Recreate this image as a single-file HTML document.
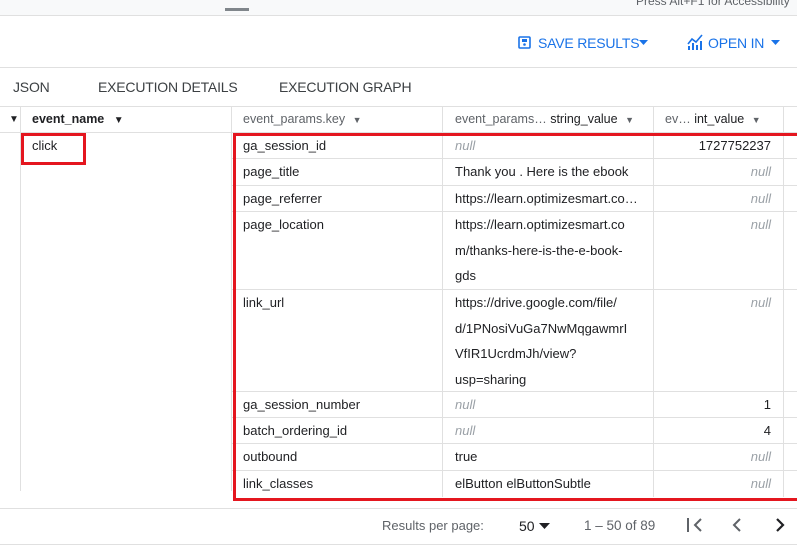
<!DOCTYPE html><html><head><style>
body{margin:0;width:797px;height:546px;overflow:hidden;background:#fff;font-family:"Liberation Sans",sans-serif;position:relative;font-size:13px;color:#202124}
.a{position:absolute}
.hl{position:absolute;left:0;width:797px;height:1px;background:#e0e0e0}
.vl{position:absolute;width:1px;background:#e0e0e0}
.c{position:absolute;line-height:25.5px;top:0}
.n{color:#9aa0a6;font-style:italic}
.blue{color:#1a73e8;font-size:14px;letter-spacing:-0.2px}
.tab{position:absolute;top:79px;font-size:14px;color:#3c4043;letter-spacing:-0.2px}
.h{position:absolute;top:112px;font-size:12.5px;color:#5f6368}
</style></head><body>
<div class="a" style="left:0;top:0;width:797px;height:15px;background:#f8f9fa"></div>
<div class="a" style="left:225px;top:8px;width:24px;height:3px;background:#80868b"></div>
<div class="a" style="left:636px;top:-6px;font-size:12px;color:#5f6368">Press Alt+F1 for Accessibility</div>
<div class="hl" style="top:15px"></div>
<svg class="a" style="left:518px;top:36px" width="13" height="13" viewBox="0 0 13 13"><rect x="1" y="1" width="11" height="11" rx="1" fill="none" stroke="#1a73e8" stroke-width="1.6"/><rect x="4" y="3" width="5" height="3" fill="#1a73e8"/><circle cx="6.5" cy="8.5" r="1.3" fill="#1a73e8"/></svg>
<div class="a blue" style="left:538px;top:35px">SAVE RESULTS</div>
<svg class="a" style="left:639px;top:40px" width="9" height="5" viewBox="0 0 9 5"><path d="M0 0H9L4.5 5Z" fill="#1a73e8"/></svg>
<svg class="a" style="left:687px;top:34px" width="17" height="16" viewBox="0 0 17 16"><path d="M1 10 L5 5 L9 8 L15 1" fill="none" stroke="#1a73e8" stroke-width="1.6"/><rect x="1" y="12" width="2" height="4" fill="#1a73e8"/><rect x="5" y="9" width="2" height="7" fill="#1a73e8"/><rect x="9" y="11" width="2" height="5" fill="#1a73e8"/><rect x="13" y="7" width="2" height="9" fill="#1a73e8"/></svg>
<div class="a blue" style="left:708px;top:35px">OPEN IN</div>
<svg class="a" style="left:771px;top:40px" width="9" height="5" viewBox="0 0 9 5"><path d="M0 0H9L4.5 5Z" fill="#1a73e8"/></svg>
<div class="hl" style="top:67px"></div>
<div class="tab" style="left:13px">JSON</div>
<div class="tab" style="left:98px">EXECUTION DETAILS</div>
<div class="tab" style="left:279px">EXECUTION GRAPH</div>
<div class="hl" style="top:106px"></div>
<div class="h" style="left:9px;color:#202124;font-size:10px;top:114px">▼</div>
<div class="h" style="left:32px;color:#202124;font-weight:bold">event_name <span style="font-size:10px;margin-left:6px">▼</span></div>
<div class="h" style="left:243px">event_params.key <span style="font-size:9px;margin-left:4px">▼</span></div>
<div class="h" style="left:455px">event_params… <span style="color:#202124">string_value</span> <span style="font-size:9px;margin-left:4px">▼</span></div>
<div class="h" style="left:665px">ev… <span style="color:#202124">int_value</span> <span style="font-size:9px;margin-left:4px">▼</span></div>
<div class="hl" style="top:132px"></div>
<div class="vl" style="left:20px;top:107px;height:384px"></div>
<div class="vl" style="left:231px;top:107px;height:384px"></div>
<div class="vl" style="left:442px;top:107px;height:390px"></div>
<div class="vl" style="left:653px;top:107px;height:390px"></div>
<div class="vl" style="left:783px;top:107px;height:390px"></div>
<div style="position:absolute;left:0;top:1px;width:797px;height:546px">
<div class="c" style="left:32px;top:132px">click</div>
<div class="c" style="left:243px;top:132px">ga_session_id</div><div class="c n" style="left:455px;top:132px">null</div><div class="c" style="left:653px;top:132px;width:118px;text-align:right">1727752237</div>
<div class="c" style="left:243px;top:158px">page_title</div><div class="c" style="left:455px;top:158px">Thank you . Here is the ebook</div><div class="c n" style="left:653px;top:158px;width:118px;text-align:right">null</div>
<div class="c" style="left:243px;top:185px">page_referrer</div><div class="c" style="left:455px;top:185px">https://learn.optimizesmart.co…</div><div class="c n" style="left:653px;top:185px;width:118px;text-align:right">null</div>
<div class="c" style="left:243px;top:211px">page_location</div><div class="c" style="left:455px;top:211px">https://learn.optimizesmart.co<br>m/thanks-here-is-the-e-book-<br>gds</div><div class="c n" style="left:653px;top:211px;width:118px;text-align:right">null</div>
<div class="c" style="left:243px;top:289px">link_url</div><div class="c" style="left:455px;top:289px">https://drive.google.com/file/<br>d/1PNosiVuGa7NwMqgawmrI<br>VfIR1UcrdmJh/view?<br>usp=sharing</div><div class="c n" style="left:653px;top:289px;width:118px;text-align:right">null</div>
<div class="c" style="left:243px;top:391px">ga_session_number</div><div class="c n" style="left:455px;top:391px">null</div><div class="c" style="left:653px;top:391px;width:118px;text-align:right">1</div>
<div class="c" style="left:243px;top:417px">batch_ordering_id</div><div class="c n" style="left:455px;top:417px">null</div><div class="c" style="left:653px;top:417px;width:118px;text-align:right">4</div>
<div class="c" style="left:243px;top:443px">outbound</div><div class="c" style="left:455px;top:443px">true</div><div class="c n" style="left:653px;top:443px;width:118px;text-align:right">null</div>
<div class="c" style="left:243px;top:470px">link_classes</div><div class="c" style="left:455px;top:470px">elButton elButtonSubtle</div><div class="c n" style="left:653px;top:470px;width:118px;text-align:right">null</div>
</div>
<div class="a" style="left:231px;top:158px;width:566px;height:1px;background:#e0e0e0"></div>
<div class="a" style="left:231px;top:185px;width:566px;height:1px;background:#e0e0e0"></div>
<div class="a" style="left:231px;top:211px;width:566px;height:1px;background:#e0e0e0"></div>
<div class="a" style="left:231px;top:289px;width:566px;height:1px;background:#e0e0e0"></div>
<div class="a" style="left:231px;top:391px;width:566px;height:1px;background:#e0e0e0"></div>
<div class="a" style="left:231px;top:417px;width:566px;height:1px;background:#e0e0e0"></div>
<div class="a" style="left:231px;top:443px;width:566px;height:1px;background:#e0e0e0"></div>
<div class="a" style="left:231px;top:470px;width:566px;height:1px;background:#e0e0e0"></div>
<div class="a" style="left:21px;top:133px;width:59px;height:26px;border:3px solid #e4161f"></div>
<div class="a" style="left:233px;top:133px;width:570px;height:362px;border:3px solid #e4161f"></div>
<div class="hl" style="top:508px"></div>
<div class="a" style="left:382px;top:518px;color:#5f6368">Results per page:</div>
<div class="a" style="left:519px;top:518px;font-size:14px">50</div>
<svg class="a" style="left:539px;top:523px" width="11" height="6" viewBox="0 0 11 6"><path d="M0 0H11L5.5 6Z" fill="#202124"/></svg>
<div class="a" style="left:584px;top:518px;color:#5f6368;font-size:13.5px">1 – 50 of 89</div>
<svg class="a" style="left:686px;top:517px" width="18" height="16" viewBox="0 0 18 16"><path d="M2 1V15" stroke="#5f6368" stroke-width="2"/><path d="M15 2L9 8L15 14" fill="none" stroke="#5f6368" stroke-width="2"/></svg>
<svg class="a" style="left:730px;top:517px" width="14" height="16" viewBox="0 0 14 16"><path d="M10 2L4 8L10 14" fill="none" stroke="#5f6368" stroke-width="2"/></svg>
<svg class="a" style="left:773px;top:517px" width="14" height="16" viewBox="0 0 14 16"><path d="M4 2L10 8L4 14" fill="none" stroke="#202124" stroke-width="2.2"/></svg>
<div class="hl" style="top:544px"></div>
</body></html>
